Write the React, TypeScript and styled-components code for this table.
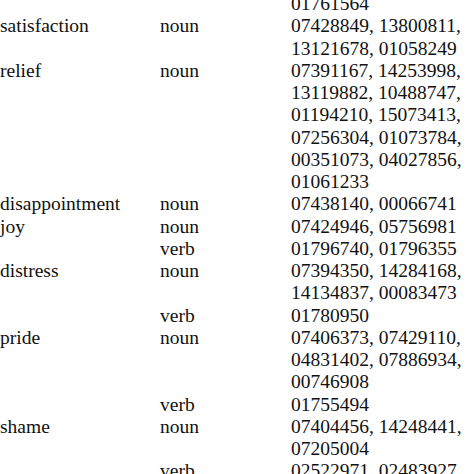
import React from "react";
import styled, { createGlobalStyle } from "styled-components";

const GlobalStyle = createGlobalStyle`
  html, body {
    margin: 0;
    padding: 0;
    background: #ffffff;
    overflow: hidden;
  }
`;

interface Entry {
  word: string;
  pos: string;
  ids: string[];
}

const entries: Entry[] = [
  { word: "", pos: "", ids: ["01761564"] },
  { word: "satisfaction", pos: "noun", ids: ["07428849, 13800811,", "13121678, 01058249"] },
  {
    word: "relief",
    pos: "noun",
    ids: [
      "07391167, 14253998,",
      "13119882, 10488747,",
      "01194210, 15073413,",
      "07256304, 01073784,",
      "00351073, 04027856,",
      "01061233",
    ],
  },
  { word: "disappointment", pos: "noun", ids: ["07438140, 00066741"] },
  { word: "joy", pos: "noun", ids: ["07424946, 05756981"] },
  { word: "", pos: "verb", ids: ["01796740, 01796355"] },
  { word: "distress", pos: "noun", ids: ["07394350, 14284168,", "14134837, 00083473"] },
  { word: "", pos: "verb", ids: ["01780950"] },
  {
    word: "pride",
    pos: "noun",
    ids: ["07406373, 07429110,", "04831402, 07886934,", "00746908"],
  },
  { word: "", pos: "verb", ids: ["01755494"] },
  { word: "shame", pos: "noun", ids: ["07404456, 14248441,", "07205004"] },
  { word: "", pos: "verb", ids: ["02522971, 02483927,", "02117649"] },
];

const App: React.FC = () => {
  return (
    <>
      <GlobalStyle />
      <SenseTable>
        {entries.map((entry, i) => (
          <SenseRow key={i}>
            <WordCell>{entry.word}</WordCell>
            <PosCell>{entry.pos}</PosCell>
            <IdCell>
              {entry.ids.map((line, j) => (
                <IdLine key={j}>{line}</IdLine>
              ))}
            </IdCell>
          </SenseRow>
        ))}
      </SenseTable>
    </>
  );
};

export default App;

const SenseTable = styled.div`
  display: flex;
  flex-direction: column;
  margin-top: -7px;
  font-family: "Liberation Serif", "Times New Roman", serif;
  font-size: 19.5px;
  line-height: 22.25px;
  color: #111111;
`;

const SenseRow = styled.div`
  display: grid;
  grid-template-columns: 160px 131px 1fr;
`;

const WordCell = styled.div`
  white-space: nowrap;
`;

const PosCell = styled.div`
  white-space: nowrap;
`;

const IdCell = styled.div`
  display: flex;
  flex-direction: column;
`;

const IdLine = styled.span`
  white-space: nowrap;
`;
